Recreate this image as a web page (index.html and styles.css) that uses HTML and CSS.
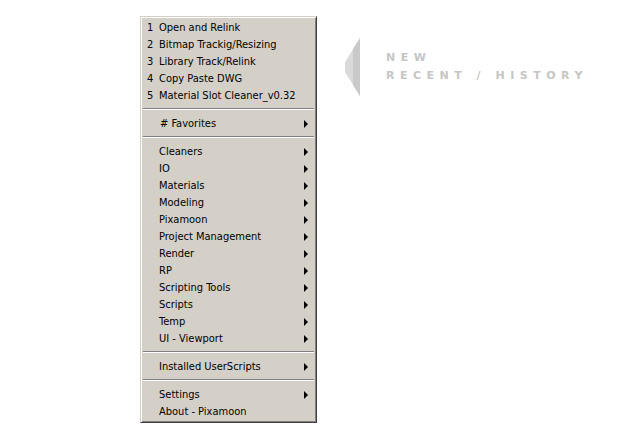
FILE: index.html
```html
<!DOCTYPE html>
<html lang="en">
<head>
    <meta charset="UTF-8">
    <title>Pixamoon menu</title>
    <link rel="stylesheet" href="styles.css">
</head>
<body>
    <div class="page">
        <div class="menu">
            <div class="item"><span class="num">1</span><span class="label">Open and Relink</span></div>
            <div class="item"><span class="num">2</span><span class="label">Bitmap Trackig/Resizing</span></div>
            <div class="item"><span class="num">3</span><span class="label">Library Track/Relink</span></div>
            <div class="item"><span class="num">4</span><span class="label">Copy Paste DWG</span></div>
            <div class="item"><span class="num">5</span><span class="label">Material Slot Cleaner_v0.32</span></div>
            <div class="sep"></div>
            <div class="item"><span class="num"></span><span class="label fav"># Favorites</span><span class="sub"></span></div>
            <div class="sep"></div>
            <div class="item"><span class="num"></span><span class="label">Cleaners</span><span class="sub"></span></div>
            <div class="item"><span class="num"></span><span class="label">IO</span><span class="sub"></span></div>
            <div class="item"><span class="num"></span><span class="label">Materials</span><span class="sub"></span></div>
            <div class="item"><span class="num"></span><span class="label">Modeling</span><span class="sub"></span></div>
            <div class="item"><span class="num"></span><span class="label">Pixamoon</span><span class="sub"></span></div>
            <div class="item"><span class="num"></span><span class="label">Project Management</span><span class="sub"></span></div>
            <div class="item"><span class="num"></span><span class="label">Render</span><span class="sub"></span></div>
            <div class="item"><span class="num"></span><span class="label">RP</span><span class="sub"></span></div>
            <div class="item"><span class="num"></span><span class="label">Scripting Tools</span><span class="sub"></span></div>
            <div class="item"><span class="num"></span><span class="label">Scripts</span><span class="sub"></span></div>
            <div class="item"><span class="num"></span><span class="label">Temp</span><span class="sub"></span></div>
            <div class="item"><span class="num"></span><span class="label">UI - Viewport</span><span class="sub"></span></div>
            <div class="sep"></div>
            <div class="item"><span class="num"></span><span class="label">Installed UserScripts</span><span class="sub"></span></div>
            <div class="sep"></div>
            <div class="item"><span class="num"></span><span class="label">Settings</span><span class="sub"></span></div>
            <div class="item"><span class="num"></span><span class="label">About - Pixamoon</span></div>
        </div>

        <div class="hint">
            <svg class="hint-arrow" width="15" height="58" viewBox="0 0 15 58">
                <polygon points="15,0 0,24 0,34 15,58" fill="#dadada"/>
                <polygon points="8,11 15,0 15,58 8,47" fill="#c9c9c9"/>
            </svg>
            <div class="hint-text">
                <div>NEW</div>
                <div>RECENT / HISTORY</div>
            </div>
        </div>
    </div>
</body>
</html>
```

FILE: styles.css
```css
body {
    margin: 0;
    background-color: #fff;
    font-family: 'DejaVu Sans', sans-serif;
}
.page {
    display: flex;
    align-items: flex-start;
    padding: 16px 0 0 140px;
}
.menu {
    width: 175px;
    padding: 2px 0 2px 0;
    background-color: #d4d0c8;
    border: 1px solid;
    border-color: #d4d0c8 #404040 #404040 #d4d0c8;
    box-shadow: inset 1px 1px #fff, inset -1px -1px #808080;
    font-family: 'DejaVu Sans Condensed', 'DejaVu Sans', sans-serif;
    font-size: 11px;
    color: #000;
}
.item {
    display: flex;
    align-items: center;
    height: 17px;
    padding-left: 1px;
}
.num {
    width: 12px;
    padding-left: 5px;
}
.label {
    flex: 1;
}
.fav {
    padding-left: 1px;
}
.sub {
    width: 0;
    height: 0;
    margin-right: 8px;
    border-left: 4px solid #000;
    border-top: 4px solid transparent;
    border-bottom: 4px solid transparent;
}
.sep {
    height: 2px;
    margin: 4px 2px 5px 2px;
    border-top: 1px solid #808080;
    border-bottom: 1px solid #fff;
    box-sizing: border-box;
}
.hint {
    display: flex;
    align-items: flex-start;
    margin: 22px 0 0 28px;
}
.hint-text {
    margin: 11px 0 0 26px;
    font-size: 11px;
    font-weight: bold;
    line-height: 18px;
    letter-spacing: 5.5px;
    color: #c6c6c6;
}
```
